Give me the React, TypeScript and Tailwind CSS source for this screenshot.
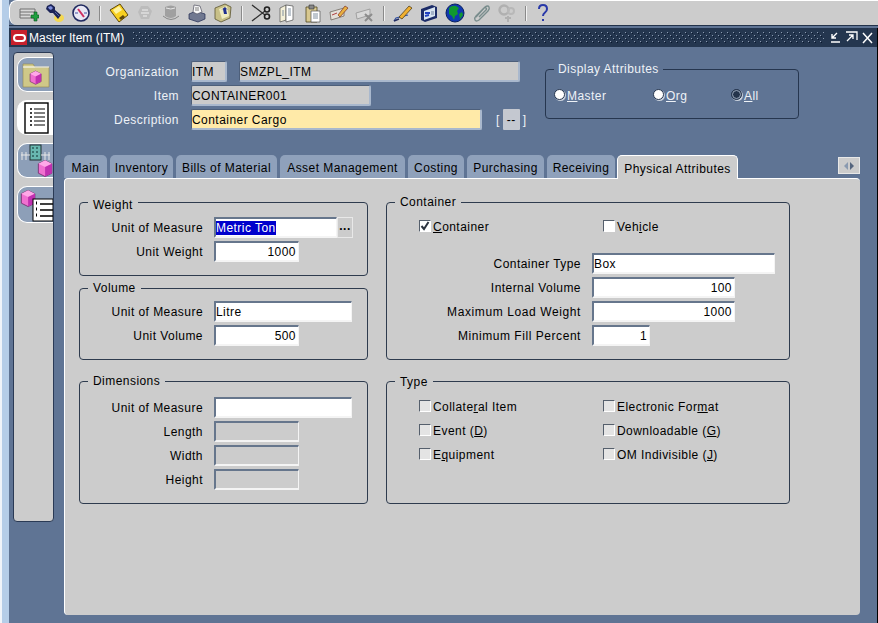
import React from "react";

const Sep = () => <div className="w-[2px] h-[15px] bg-[#f2f2f2] border-l border-[#8a8a8a] mx-[8px]" />;

const Ico = ({ children }: { children: React.ReactNode }) => (
  <svg width={20} height={20} viewBox="0 0 20 20" className="shrink-0">{children}</svg>
);

const Cube = ({ x = 0, y = 0, s = 1 }: { x?: number; y?: number; s?: number }) => (
  <g transform={`translate(${x} ${y}) scale(${s})`}>
    <path d="M1 3.5 6 1l5 2.5v7L6 13l-5-2.5z" fill="#f070d0" stroke="#702868" strokeWidth=".6" />
    <path d="M1 3.5 6 6l5-2.5L6 1z" fill="#ffa8e8" />
    <path d="M6 6v7l5-2.5v-7z" fill="#c030b0" />
  </g>
);

const Tool = () => (
  <div className="h-[25px] flex items-center pl-[9px] bg-[#cccccc] border-t border-l border-white rounded-tl-[8px] rounded-bl-[8px]">
    <Ico><path d="M1 6h15v9H1z" fill="#d8d8d8" stroke="#707070" /><path d="M1 9h15M1 12h10" stroke="#707070" /><path d="M12 12h3V9h3v3h2v3h-2v3h-3v-3h-3z" fill="#20a040" stroke="#0a5020" strokeWidth=".6" /></Ico>
    <div className="w-[6px]" />
    <Ico><ellipse cx="14" cy="15" rx="5" ry="4" fill="#f4d850" /><path d="m2 3 4-2 4 3 0 3 6 5-3 4-5-6-3 0-4-4z" fill="#1c2458" /><path d="m3 4 3-1 2 2-2 2-2-1z" fill="#7c8cdc" /><path d="m10 9 4 4" stroke="#5060a0" /></Ico>
    <div className="w-[6px]" />
    <Ico><circle cx="10" cy="10" r="8" fill="#e8e8f4" stroke="#202a60" strokeWidth="1.6" /><path d="m7 6 6 8" stroke="#d03060" strokeWidth="2" /><path d="M4 10h3M13 10h3" stroke="#4050a0" /></Ico>
    <Sep />
    <Ico><path d="m1 7 10-6 8 11-9 7z" fill="#f8d020" stroke="#604808" /><path d="m4 7 6-4 3 4-6 4z" fill="#fff4a0" /><path d="m10 15 4-3 2 2-4 3z" fill="#604808" /></Ico>
    <div className="w-[6px]" />
    <Ico><path d="M6 3h7l4 5-3 8H6L3 9z" fill="#bcbcbc" /><path d="M7 7h6M6 10h8M8 13h4" stroke="#f0f0f0" /></Ico>
    <div className="w-[6px]" />
    <Ico><path d="M4 4q6-3 11 0v9q-5 4-11 0z" fill="#a0a0a0" /><path d="M5 5q5 2 9 0" stroke="#e8e8e8" fill="none" /><path d="M2 13q8 7 16 0" stroke="#888" fill="none" /></Ico>
    <div className="w-[6px]" />
    <Ico><path d="M2 11 9 8l9 3v5l-7 3-9-3z" fill="#707890" stroke="#202a50" strokeWidth=".7" /><path d="m6 9 1-7 6 1 2 6-5 2z" fill="#f8f8f8" stroke="#505060" strokeWidth=".7" /><path d="M8 5h4M8 7h4" stroke="#808080" /></Ico>
    <div className="w-[6px]" />
    <Ico><path d="M2 5 12 1l6 3-1 11-9 4-6-3z" fill="#c8c088" stroke="#5a5430" strokeWidth=".8" /><path d="m6 6 8-3 2 10-7 3z" fill="#f0ecc0" /><path d="m11 11-1-5-2 1 4-3 3 3-2-1 1 5z" fill="#203090" /></Ico>
    <Sep />
    <Ico><path d="M1 2 14 12M1 18 14 8" stroke="#303030" strokeWidth="1.3" /><circle cx="16" cy="6.5" r="2.5" fill="none" stroke="#202020" strokeWidth="1.6" /><circle cx="16" cy="13.5" r="2.5" fill="none" stroke="#202020" strokeWidth="1.6" /></Ico>
    <div className="w-[6px]" />
    <Ico><path d="M3 5 9 2v15l-6 2z" fill="#f4f0d8" stroke="#505050" strokeWidth=".7" /><path d="m9 2 7 1v14l-7 2z" fill="#fff" stroke="#505050" strokeWidth=".7" /><path d="M11 6h3M11 8h3M11 10h3M11 12h3M5 8h2M5 10h2M5 12h2" stroke="#8090a0" /></Ico>
    <div className="w-[6px]" />
    <Ico><path d="M3 4h11v15H3z" fill="#d8c890" stroke="#504820" strokeWidth=".8" /><path d="M6 2h5v4H6z" fill="#888" stroke="#303030" strokeWidth=".6" /><path d="M8 8h9v11H8z" fill="#fff" stroke="#505050" strokeWidth=".7" /><path d="M10 11h5M10 13h5M10 15h5" stroke="#8090a0" /></Ico>
    <div className="w-[6px]" />
    <Ico><path d="m1 9 14-4v8L2 17z" fill="#e4e0d8" stroke="#706860" strokeWidth=".8" /><path d="m9 12 7-9 3 2-8 9z" fill="#e8b040" stroke="#803020" strokeWidth=".7" /><path d="m3 12 5-2" stroke="#b04040" /></Ico>
    <div className="w-[6px]" />
    <Ico><path d="m1 10 14-4v6L2 16z" fill="#d8d8d8" stroke="#a0a0a0" /><path d="m10 11 7 7M17 11l-7 7" stroke="#8c8c8c" strokeWidth="2" /></Ico>
    <Sep />
    <Ico><path d="m1 18 2-3 12-3" stroke="#3050a0" fill="none" strokeWidth="1.2" /><path d="m6 14 10-11 3 2L9 16z" fill="#f0b030" stroke="#403010" strokeWidth=".7" /><path d="m1 18 5-2" stroke="#202a60" strokeWidth="1.4" /></Ico>
    <div className="w-[6px]" />
    <Ico><path d="M2 6 13 2l5 2v11L6 19l-4-2z" fill="#1c2c68" /><path d="m5 8 11-4v9L5 17z" fill="#d8e4f0" /><path d="M6 10h5M6 13l4-1" stroke="#2040c0" strokeWidth="2" /><path d="M12 9h3M12 11h3" stroke="#7080a0" /></Ico>
    <div className="w-[6px]" />
    <Ico><circle cx="10" cy="10" r="9" fill="#1038b0" /><path d="M4 5q3-3 7-2l3 2-2 3 1 3-3 2-1 4-2-4-3-2z" fill="#109830" /><path d="m14 11 3-2 1 3-3 4z" fill="#109830" /><circle cx="10" cy="10" r="9" fill="none" stroke="#082060" /></Ico>
    <div className="w-[6px]" />
    <Ico><path d="M5 14 14 4q3-2 4 0t-1 4l-9 9q-3 2-4 0t1-4l8-8q1-1 2 0t0 2l-7 7" fill="none" stroke="#788c8c" strokeWidth="1.4" /></Ico>
    <div className="w-[6px]" />
    <Ico><circle cx="7" cy="7" r="4.5" fill="none" stroke="#b0b0b0" strokeWidth="2.4" /><circle cx="14" cy="8" r="3" fill="none" stroke="#b8b8b8" strokeWidth="2" /><path d="M11 13v6M8 15h6" stroke="#b0b0b0" strokeWidth="2" /></Ico>
    <Sep />
    <div className="w-[2px]" />
    <svg width={12} height={20} viewBox="0 0 12 20" className="shrink-0"><path d="M2 6q0-4 4-4t4 4q0 2-2 3.500T6 13" fill="none" stroke="#2838a8" strokeWidth="2" /><path d="M5 16h2v2H5z" fill="#2838a8" /></svg>
  </div>
);

const Dots = () => (
  <svg width="692" height="13" className="ml-[9px] shrink-0">
    <defs>
      <pattern id="dp" width="6" height="6" patternUnits="userSpaceOnUse">
        <path d="M1 1h1v1H1zM4 4h1v1H4z" fill="#8b9ab0" />
        <path d="M2 2h1v1H2zM5 5h1v1H5z" fill="#0c1a30" />
      </pattern>
    </defs>
    <rect width="692" height="13" fill="url(#dp)" />
  </svg>
);

const Title = () => (
  <div className="h-[19px] mt-[2px] bg-[#24364f] border-r border-black flex items-center text-white pl-[2px]">
    <div className="w-[16px] h-[15px] bg-[#c8202c] flex items-center justify-center shrink-0">
      <div className="w-[13px] h-[8px] rounded-[4px] border-2 border-white" />
    </div>
    <span className="ml-[2px] w-[94px] whitespace-nowrap tracking-normal">Master Item (ITM)</span>
    <Dots />
    <svg width="50" height="16" viewBox="0 0 50 16" className="ml-[6px] shrink-0">
      <path d="M7 3 2 8M2 4v4h4M1 12h9" stroke="#fff" strokeWidth="1.4" fill="none" />
      <path d="m17 11 6-6M19 5h4v4M16 2h11v8" stroke="#fff" strokeWidth="1.300" fill="none" />
      <path d="m33 3 9 10M42 3l-9 10" stroke="#fff" strokeWidth="1.500" />
    </svg>
  </div>
);

const RailTab = ({ active, children, cls }: { active?: boolean; children: React.ReactNode; cls: string }) => (
  <div className={`relative w-[36px] ml-[3px] rounded-l-[10px] border-l border-t border-b border-white flex items-center justify-center ${active ? "bg-white" : "bg-[#8d9fb8]"} ${cls}`}>
    {children}
  </div>
);

const Rail = () => (
  <div className="w-[41px] h-[470px] mt-[5px] ml-[4px] bg-[#cccccc] border border-[#2a3a55] rounded-[4px] shrink-0">
    <RailTab cls="h-[35px] mt-[4px]">
      <svg width="30" height="26" viewBox="0 0 30 26">
        <path d="M2 5V2h10l2 3h14v20H2z" fill="#cfc888" stroke="#908850" strokeWidth=".6" />
        <path d="M2 5h26" stroke="#fff" />
        <Cube x={8} y={8} s={1.1} />
      </svg>
    </RailTab>
    <RailTab active cls="h-[35px] mt-[8px]">
      <svg width="26" height="32" viewBox="0 0 26 32">
        <rect x="2" y="1" width="23" height="30" fill="#fff" stroke="#000" strokeWidth="1.4" />
        <path d="M7 7h2M7 11h2M7 15h2M7 19h2M7 23h2" stroke="#000" strokeWidth="1.5" />
        <path d="M11 7h11M11 11h11M11 15h11M11 19h11M11 23h11" stroke="#000" />
      </svg>
    </RailTab>
    <RailTab cls="h-[35px] mt-[8px]">
      <svg width="34" height="34" viewBox="0 0 34 34">
        <rect x="11" y="1" width="11" height="15" fill="#68b8b0" stroke="#203030" />
        <path d="M13 4h2M17 4h2M13 8h2M17 8h2M13 12h2M17 12h2" stroke="#103030" />
        <path d="M3 8v8M7 8v8M2 11h9M22 11h9M26 8v8M30 8v8" stroke="#e8e8e8" />
        <Cube x={18} y={15} s={1.35} />
      </svg>
    </RailTab>
    <RailTab cls="h-[37px] mt-[8px]">
      <svg width="34" height="35" viewBox="0 0 34 35">
        <Cube x={1} y={2} s={1.35} />
        <rect x="14" y="12" width="20" height="22" fill="#fff" stroke="#000" />
        <path d="M17 16h1M17 22h1M17 28h1" stroke="#000" strokeWidth="3" />
        <path d="M21 17h13M21 23h13M21 29h13" stroke="#000" strokeWidth="1.300" />
      </svg>
    </RailTab>
  </div>
);

const Field = ({ w, v, bg = "bg-white", right, sel }: { w: string; v?: string; bg?: string; right?: boolean; sel?: boolean }) => (
  <div className={`h-[21px] shrink-0 border-t-2 border-l-2 border-t-[#66768c] border-l-[#66768c] border-r border-b-2 border-r-[#f4f4f4] border-b-[#f4f4f4] flex items-center overflow-hidden whitespace-nowrap pt-[1px] ${right ? "justify-end pr-[2px]" : ""} ${bg} rounded-[1px] ${w}`}>
    {sel ? <span className="bg-[#0000cc] text-white">{v}</span> : v}
  </div>
);

const HField = ({ w, v, bg = "bg-[#cbcbcb]" }: { w: string; v: string; bg?: string }) => (
  <div className={`h-[21px] shrink-0 border-t border-l border-[#4d5f7a] border-r-2 border-b-2 border-r-[#a9b8cd] border-b-[#a9b8cd] flex items-center whitespace-nowrap pt-[2px] text-black ${bg} rounded-[2px] ${w}`}>
    {v}
  </div>
);

const HRow = ({ label, children }: { label: string; children: React.ReactNode }) => (
  <div className="flex items-center h-[21px] mb-[3px]">
    <div className="w-[115px] text-right text-[#eef2f7] mr-[12px] whitespace-nowrap">{label}</div>
    {children}
  </div>
);

const Radio = ({ on, cls, children }: { on?: boolean; cls: string; children: React.ReactNode }) => (
  <div className={`flex items-center ${cls}`}>
    <div className={`w-[11px] h-[11px] -mt-[3px] rounded-full border border-[#26364f] shadow-[1px_1px_0_#c8d0dc] flex items-center justify-center ${on ? "bg-[#24344c]" : "bg-white"}`}>
      {on && <div className="w-[9px] h-[9px] rounded-full border border-[#9aa8bc] bg-[#24344c]" />}
    </div>
    <span className="ml-[2px] text-[#eef2f7]">{children}</span>
  </div>
);

const Group = ({ title, cls, lt = "pt-[2px]", children }: { title: string; cls: string; lt?: string; children: React.ReactNode }) => (
  <fieldset className={`border border-[#2e3b4e] rounded-[4px] ${cls}`}>
    <legend className={`ml-[8px] px-[5px] h-[16px] leading-[14px] text-black ${lt}`}>{title}</legend>
    {children}
  </fieldset>
);

const FRow = ({ label, lw, children }: { label: string; lw: string; children: React.ReactNode }) => (
  <div className="flex items-center h-[21px] mb-[3px]">
    <div className={`text-right mr-[11px] whitespace-nowrap pt-[1px] ${lw}`}>{label}</div>
    {children}
  </div>
);

const Check = ({ on, cls, bg = "bg-[#e4e4e4]", children }: { on?: boolean; cls: string; bg?: string; children: React.ReactNode }) => (
  <div className={`flex items-center h-[21px] ${cls}`}>
    <div className={`relative w-[12px] h-[12px] -mt-[2px] shrink-0 border-t border-l border-[#555f6c] border-r border-b border-r-white border-b-white ${bg}`}>
      {on && (
        <svg width="12" height="12" viewBox="0 0 12 12" className="absolute -left-px -top-px">
          <path d="m2.500 6 2.500 3 4.500-7" fill="none" stroke="#2c3440" strokeWidth="2" />
        </svg>
      )}
    </div>
    <span className="ml-[2px] pt-[1px] whitespace-nowrap">{children}</span>
  </div>
);

const Tab = ({ w, t }: { w: string; t: string }) => (
  <div className={`h-[23px] bg-[#8fa1bb] rounded-t-[5px] flex items-center justify-center whitespace-nowrap text-black pt-[3px] ${w}`}>{t}</div>
);

const TabsRow = () => (
  <div className="flex items-start h-[23px] w-[796px] gap-[3px] relative z-10">
    <Tab w="w-[43px]" t="Main" />
    <Tab w="w-[63px]" t="Inventory" />
    <Tab w="w-[101px]" t="Bills of Material" />
    <Tab w="w-[125px]" t="Asset Management" />
    <Tab w="w-[56px]" t="Costing" />
    <Tab w="w-[77px]" t="Purchasing" />
    <Tab w="w-[68px]" t="Receiving" />
    <div className="h-[24px] w-[121px] -ml-[1px] bg-[#cccccc] border-t border-l border-r border-white rounded-t-[5px] flex items-center justify-center whitespace-nowrap text-black pt-[2px]">Physical Attributes</div>
    <div className="ml-auto mt-[2px] w-[22px] h-[17px] bg-[#cccccc] border border-[#e8e8e8] flex items-center justify-center">
      <svg width="12" height="8" viewBox="0 0 12 8"><path d="M5 0v8L1 4z" fill="#8a9ab0" /><path d="M7 0v8l4-4z" fill="#55657e" /></svg>
    </div>
  </div>
);

export default function App() {
  return (
    <div className="w-[878px] h-[623px] flex overflow-hidden bg-[#5f7494] text-[12px] tracking-[0.45px] leading-[14px] text-black font-['Liberation_Sans',Arial,sans-serif]">
      <div className="w-[9px] h-full shrink-0 bg-[#b5cde8] border-l-2 border-[#f0f4fa]" />
      <div className="w-[869px] flex flex-col">
        <Tool />
        <div className="h-[1px] bg-[#22324a]" />
        <Title />
        <div className="flex flex-1 border-r border-black">
          <Rail />
          <div className="ml-[10px] w-[796px]">
            <div className="flex h-[108px] pt-[14px]">
              <div className="w-[481px]">
                <HRow label="Organization">
                  <HField w="w-[36px]" v="ITM" />
                  <div className="w-[12px]" />
                  <HField w="w-[281px]" v="SMZPL_ITM" />
                </HRow>
                <HRow label="Item"><HField w="w-[180px]" v="CONTAINER001" /></HRow>
                <HRow label="Description">
                  <HField w="w-[291px]" v="Container Cargo" bg="bg-[#ffeaa8]" />
                  <span className="ml-[14px] text-[#eef2f7]">[</span>
                  <div className="ml-[3px] w-[17px] h-[21px] bg-[#c4c8d0] flex items-center justify-center text-black rounded-[1px]">--</div>
                  <span className="ml-[3px] text-[#eef2f7]">]</span>
                </HRow>
              </div>
              <fieldset className="w-[254px] h-[58px] border border-[#26364f] rounded-[4px]">
                <legend className="ml-[8px] px-[4px] h-[16px] pt-[1px] leading-[14px] text-[#eef2f7]">Display Attributes</legend>
                <div className="flex h-[20px] mt-[9px] items-center">
                  <Radio cls="ml-[8px] w-[99px]"><u>M</u>aster</Radio>
                  <Radio cls="w-[78px]"><u>O</u>rg</Radio>
                  <Radio on cls="w-[50px]"><u>A</u>ll</Radio>
                </div>
              </fieldset>
            </div>
            <TabsRow />
            <div className="h-[437px] w-[796px] bg-[#cccccc] border-t border-l border-white rounded-[4px] flex pl-[14px] pt-[15px]">
              <div className="w-[289px] mr-[18px] shrink-0">
                <Group title="Weight" lt="pt-[4px]" cls="h-[82px] w-[289px]">
                  <div className="pt-[7px]">
                    <FRow label="Unit of Measure" lw="w-[123px]">
                      <Field w="w-[123px]" v="Metric Ton" sel />
                      <div className="w-[16px] h-[21px] bg-[#cccccc] border border-[#e8e8e8] text-black flex items-center justify-center font-bold leading-none pb-[3px]">...</div>
                    </FRow>
                    <FRow label="Unit Weight" lw="w-[123px]"><Field w="w-[85px]" v="1000" right /></FRow>
                  </div>
                </Group>
                <Group title="Volume" lt="pt-[1px]" cls="h-[80px] w-[289px] mt-[4px]">
                  <div className="pt-[5px]">
                    <FRow label="Unit of Measure" lw="w-[123px]"><Field w="w-[138px]" v="Litre" /></FRow>
                    <FRow label="Unit Volume" lw="w-[123px]"><Field w="w-[85px]" v="500" right /></FRow>
                  </div>
                </Group>
                <Group title="Dimensions" lt="pt-[1px]" cls="h-[131px] w-[289px] mt-[13px]">
                  <div className="pt-[8px]">
                    <FRow label="Unit of Measure" lw="w-[123px]"><Field w="w-[138px]" /></FRow>
                    <FRow label="Length" lw="w-[123px]"><Field w="w-[85px]" bg="bg-[#cccccc]" /></FRow>
                    <FRow label="Width" lw="w-[123px]"><Field w="w-[85px]" bg="bg-[#cccccc]" /></FRow>
                    <FRow label="Height" lw="w-[123px]"><Field w="w-[85px]" bg="bg-[#cccccc]" /></FRow>
                  </div>
                </Group>
              </div>
              <div className="w-[404px] shrink-0">
                <Group title="Container" lt="pt-[1px]" cls="h-[166px] w-[404px]">
                  <div className="pt-[6px]">
                    <div className="flex mb-[16px]">
                      <Check on bg="bg-white" cls="ml-[32px] w-[184px]"><u>C</u>ontainer</Check>
                      <Check bg="bg-white" cls="w-[100px]">Veh<u>i</u>cle</Check>
                    </div>
                    <FRow label="Container Type" lw="w-[194px]"><Field w="w-[183px]" v="Box" /></FRow>
                    <FRow label="Internal Volume" lw="w-[194px]"><Field w="w-[143px]" v="100" right /></FRow>
                    <FRow label="Maximum Load Weight" lw="w-[194px] tracking-[0.6px]"><Field w="w-[143px]" v="1000" right /></FRow>
                    <FRow label="Minimum Fill Percent" lw="w-[194px] tracking-[0.55px]"><Field w="w-[58px]" v="1" right /></FRow>
                  </div>
                </Group>
                <Group title="Type" lt="pt-[2px]" cls="h-[131px] w-[404px] mt-[13px]">
                  <div className="pt-[7px]">
                    <div className="flex mb-[3px]">
                      <Check cls="ml-[32px] w-[184px]">Collate<u>r</u>al Item</Check>
                      <Check cls="w-[130px]">Electronic For<u>m</u>at</Check>
                    </div>
                    <div className="flex mb-[3px]">
                      <Check cls="ml-[32px] w-[184px]">Event (<u>D</u>)</Check>
                      <Check cls="w-[130px]">Downloadable (<u>G</u>)</Check>
                    </div>
                    <div className="flex">
                      <Check cls="ml-[32px] w-[184px]">E<u>q</u>uipment</Check>
                      <Check cls="w-[130px]">OM Indivisible (<u>J</u>)</Check>
                    </div>
                  </div>
                </Group>
              </div>
            </div>
          </div>
        </div>
      </div>
    </div>
  );
}
